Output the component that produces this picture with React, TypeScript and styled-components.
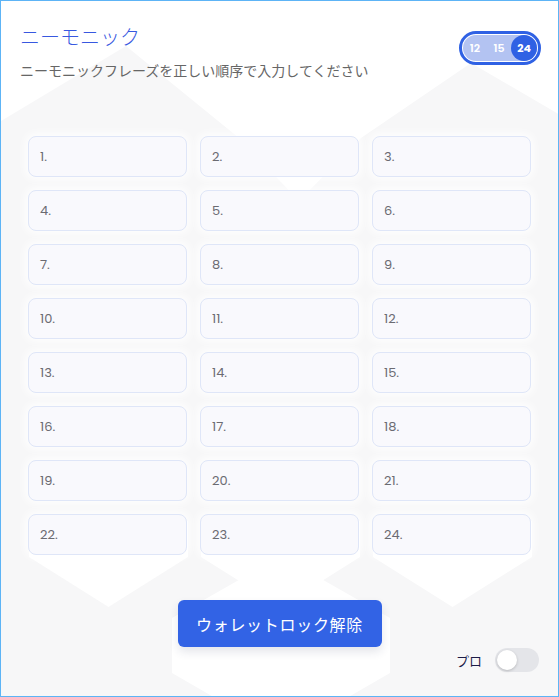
import React, { useState } from "react";
import styled, { createGlobalStyle } from "styled-components";

const Global = createGlobalStyle`
  html, body, #root { margin: 0; padding: 0; height: 100%; }
  body { background: #ffffff; }
  * { box-sizing: border-box; }
`;

const JP = `"Noto Sans CJK JP", "Noto Sans", sans-serif`;
const NUM = `"Poppins", "Inter", "Noto Sans", sans-serif`;

const Panel = styled.div`
  position: relative;
  width: 559px;
  height: 697px;
  border: 1px solid #5db4f6;
  background: #ffffff;
  overflow: hidden;
  font-family: ${JP};
`;

const Decor = styled.svg`
  position: absolute;
  inset: 0;
  width: 100%;
  height: 100%;
  z-index: 0;
  pointer-events: none;
`;

const Content = styled.div`
  position: relative;
  z-index: 1;
  display: flex;
  flex-direction: column;
  height: 100%;
`;

const Header = styled.header`
  display: flex;
  justify-content: space-between;
  align-items: flex-start;
  padding: 22px 17px 0 19px;
`;

const TitleBlock = styled.div`
  display: flex;
  flex-direction: column;
`;

const Title = styled.h1`
  margin: 0;
  font-size: 20px;
  line-height: 28px;
  font-weight: 300;
  color: #3858e0;
`;

const Subtitle = styled.p`
  margin: 9px 0 0;
  font-size: 14px;
  line-height: 20px;
  color: #666666;
  font-weight: 400;
`;

const Pill = styled.div`
  margin-top: 8px;
  display: flex;
  padding: 1px;
  border: 3px solid #2f61e4;
  border-radius: 999px;
  background: #ffffff;
`;

const PillInner = styled.div`
  display: flex;
  align-items: center;
  background: #b3c3f2;
  border-radius: 999px;
`;

const PillItem = styled.button<{ $active?: boolean }>`
  border: none;
  padding: 0;
  margin: 0;
  height: 26px;
  width: ${(p) => (p.$active ? "26px" : "24px")};
  border-radius: 999px;
  background: ${(p) => (p.$active ? "#2f61e4" : "transparent")};
  color: #ffffff;
  font-family: ${NUM};
  font-size: 11px;
  font-weight: ${(p) => (p.$active ? 700 : 600)};
  cursor: pointer;
  display: flex;
  align-items: center;
  justify-content: center;
`;

const Grid = styled.div`
  margin-top: 56px;
  padding: 0 27px;
  display: grid;
  grid-template-columns: repeat(3, 159px);
  grid-auto-rows: 41px;
  column-gap: 13px;
  row-gap: 13px;
`;

const WordCard = styled.label`
  display: flex;
  align-items: center;
  padding: 0 11px;
  border: 1px solid #dfe6f8;
  border-radius: 8px;
  background: #f9f9fd;
  box-shadow: 0 0 8px 3px rgba(255, 255, 255, 0.85);
  font-family: ${NUM};
  font-size: 13px;
  color: #6b6b72;
`;

const WordInput = styled.input`
  flex: 1;
  min-width: 0;
  border: none;
  outline: none;
  background: transparent;
  margin-left: 4px;
  font-family: ${NUM};
  font-size: 13px;
  color: #333;
`;

const ButtonRow = styled.div`
  display: flex;
  justify-content: center;
  margin-top: 45px;
`;

const UnlockButton = styled.button`
  width: 204px;
  height: 47px;
  border: none;
  border-radius: 6px;
  background: #3263e5;
  color: #ffffff;
  font-family: ${JP};
  font-size: 16px;
  font-weight: 400;
  letter-spacing: 0.7px;
  box-shadow: 0 5px 10px rgba(40, 50, 90, 0.12);
  cursor: pointer;
`;

const Footer = styled.div`
  display: flex;
  justify-content: flex-end;
  align-items: center;
  gap: 13px;
  padding-right: 19px;
  margin-top: 1px;
`;

const ProLabel = styled.span`
  font-size: 13px;
  color: #1c1c48;
  font-family: ${JP};
`;

const Switch = styled.button<{ $on?: boolean }>`
  position: relative;
  width: 44px;
  height: 24px;
  border: none;
  padding: 0;
  border-radius: 12px;
  background: ${(p) => (p.$on ? "#3263e5" : "#e4e5e9")};
  cursor: pointer;
`;

const Knob = styled.span<{ $on?: boolean }>`
  position: absolute;
  top: 2px;
  left: ${(p) => (p.$on ? "22px" : "2px")};
  width: 20px;
  height: 20px;
  border-radius: 50%;
  background: #ffffff;
  box-shadow: 0 1px 3px rgba(0, 0, 0, 0.2);
`;

const cols = [
  [28, 187],
  [200, 359],
  [372, 531],
];

export default function App() {
  const [count, setCount] = useState(24);
  const [pro, setPro] = useState(false);
  const words = Array.from({ length: count }, (_, i) => i + 1);

  return (
    <>
      <Global />
      <Panel>
        <Decor viewBox="0 0 557 695" preserveAspectRatio="none">
          <polygon
            fill="#f7f7f8"
            points="0,120 125,45 238,137 298,200 360,137 470,62 559,114 559,697 0,697"
          />
          {cols.map(([a, b]) => (
            <polygon
              key={a}
              fill="#ffffff"
              points={`${a},520 ${b},520 ${b},556 ${(a + b) / 2},606 ${a},556`}
            />
          ))}
          <polygon
            fill="#ffffff"
            points="171,617 280,555 389,617 389,672 280,735 171,672"
          />
        </Decor>
        <Content>
          <Header>
            <TitleBlock>
              <Title>ニーモニック</Title>
              <Subtitle>ニーモニックフレーズを正しい順序で入力してください</Subtitle>
            </TitleBlock>
            <Pill>
              <PillInner>
                {[12, 15, 24].map((n) => (
                  <PillItem key={n} $active={count === n} onClick={() => setCount(n)}>
                    {n}
                  </PillItem>
                ))}
              </PillInner>
            </Pill>
          </Header>
          <Grid>
            {words.map((n) => (
              <WordCard key={n}>
                {n}.
                <WordInput aria-label={`word ${n}`} />
              </WordCard>
            ))}
          </Grid>
          <ButtonRow>
            <UnlockButton>ウォレットロック解除</UnlockButton>
          </ButtonRow>
          <Footer>
            <ProLabel>プロ</ProLabel>
            <Switch $on={pro} onClick={() => setPro(!pro)}>
              <Knob $on={pro} />
            </Switch>
          </Footer>
        </Content>
      </Panel>
    </>
  );
}
